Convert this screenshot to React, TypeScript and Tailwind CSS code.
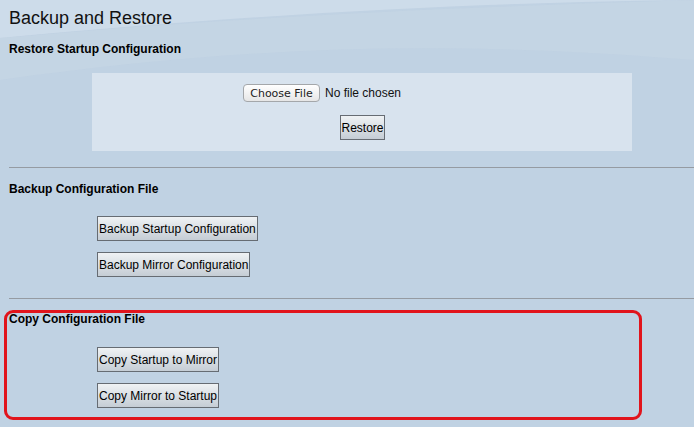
import React from 'react'

const btn =
  'h-[25px] px-[1px] border border-[#666c73] bg-[linear-gradient(#eff2f4,#c5cdd5)] text-[12px] leading-none text-black whitespace-nowrap'

function Heading({ children, className = '' }: { children: React.ReactNode; className?: string }) {
  return (
    <div className={`ml-[9px] text-[12px] leading-[16px] font-bold text-black ${className}`}>{children}</div>
  )
}

function Rule({ className = '' }: { className?: string }) {
  return <div className={`ml-[9px] h-px bg-[#959ba2] ${className}`} />
}

export default function App() {
  return (
    <div
      className="relative w-[694px] h-[427px] overflow-hidden bg-[#c0d2e3]"
      style={{ fontFamily: '"Liberation Sans", Arial, sans-serif' }}
    >
      {/* background swoosh */}
      <svg className="absolute inset-0 pointer-events-none" width="694" height="427" viewBox="0 0 694 427">
        <path d="M0 0 H694 V0 C520 2 300 10 0 38 Z" fill="#d3e0ec" opacity="0.7" />
        <path d="M0 38 C200 20 420 8 694 0 V60 C450 40 250 45 0 80 Z" fill="#c7d7e6" opacity="0.5" />
      </svg>

      <div className="relative">
        <h1 className="pt-[7px] pl-[9px] text-[18px] leading-[22px] font-normal text-[#111]">Backup and Restore</h1>

        <Heading className="mt-[12px]">Restore Startup Configuration</Heading>

        <div className="mt-[16px] ml-[92px] w-[540px] h-[78px] bg-[#d8e3ee] flex flex-col items-center pt-[11px]">
          <div className="w-[238px] flex items-center gap-[5px]">
            <button
              className="h-[18px] w-[77px] rounded-[4px] border border-[#a4a7aa] bg-[linear-gradient(#ffffff,#e6e6e6)] text-[11px] leading-none text-[#222]"
              style={{ fontFamily: '"DejaVu Sans", sans-serif' }}
            >
              Choose File
            </button>
            <span className="text-[12px] text-[#111]">No file chosen</span>
          </div>
          <button className={`${btn} mt-[13px] w-[45px]`}>Restore</button>
        </div>

        <Rule className="mt-[16px]" />

        <Heading className="mt-[13px]">Backup Configuration File</Heading>

        <div className="ml-[97px] mt-[19px] flex flex-col items-start gap-[11px]">
          <button className={btn}>Backup Startup Configuration</button>
          <button className={btn}>Backup Mirror Configuration</button>
        </div>

        <Rule className="mt-[21px]" />

        <Heading className="mt-[12px]">Copy Configuration File</Heading>

        <div className="ml-[97px] mt-[20px] flex flex-col items-start gap-[11px]">
          <button className={btn}>Copy Startup to Mirror</button>
          <button className={btn}>Copy Mirror to Startup</button>
        </div>
      </div>

      {/* highlight annotation */}
      <div className="absolute left-[4px] top-[310px] w-[638px] h-[110px] rounded-[9px] border-[3px] border-[#e1141c]" />
    </div>
  )
}
